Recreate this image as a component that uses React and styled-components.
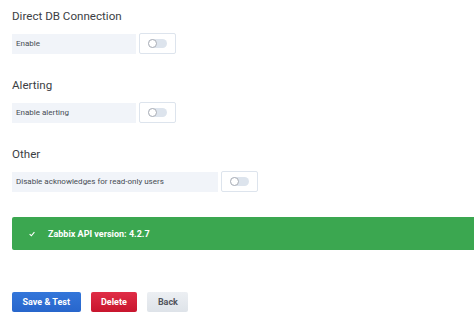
import React from "react";
import styled, { createGlobalStyle } from "styled-components";

const GlobalStyle = createGlobalStyle`
  body {
    margin: 0;
    background: #fff;
    font-family: Roboto, "Liberation Sans", sans-serif;
    color: #52545c;
  }
`;

const Page = styled.div`
  padding: 8px 0 0 12px;
  display: flex;
  flex-direction: column;
`;

const Section = styled.section`
  margin-bottom: 23px;
`;

const Title = styled.h3`
  margin: 0 0 9px;
  font-size: 11.6px;
  font-weight: 400;
  color: #3b3e44;
  line-height: 16px;
`;

const Row = styled.div`
  display: flex;
  gap: 3px;
  align-items: center;
`;

const Label = styled.div`
  width: ${(p) => p.width}px;
  height: 20px;
  box-sizing: border-box;
  padding: 0 4px;
  display: flex;
  align-items: center;
  background: #f1f4f9;
  font-size: 8px;
  color: #464c54;
`;

const ToggleBox = styled.div`
  width: 37px;
  height: 21px;
  box-sizing: border-box;
  border: 1px solid #dde4ed;
  border-radius: 2px;
  display: flex;
  align-items: center;
  justify-content: center;
`;

const Track = styled.div`
  position: relative;
  width: 19px;
  height: 9px;
  border-radius: 5px;
  background: #dde4ed;
`;

const Knob = styled.div`
  position: absolute;
  left: 0;
  top: 0;
  width: 9px;
  height: 9px;
  box-sizing: border-box;
  border-radius: 50%;
  background: #fff;
  border: 1px solid #a9adb5;
`;

const Alert = styled.div`
  margin-top: 2px;
  height: 33px;
  display: flex;
  align-items: center;
  background: #3ba750;
  border-radius: 2px 0 0 2px;
  color: #fff;
  padding-left: 16px;
`;

const AlertText = styled.span`
  margin-left: 12px;
  font-size: 9px;
  font-weight: 700;
`;

const Buttons = styled.div`
  margin-top: 42px;
  display: flex;
  gap: 10px;
`;

const Button = styled.button`
  height: 20px;
  padding: 0 10.5px;
  border: none;
  border-radius: 2px;
  font-family: Roboto, "Liberation Sans", sans-serif;
  font-size: 9px;
  font-weight: 700;
  color: ${(p) => (p.variant === "back" ? "#52545c" : "#fff")};
  background: ${(p) =>
    p.variant === "primary"
      ? "linear-gradient(to bottom, #3376da, #2866cc)"
      : p.variant === "danger"
      ? "linear-gradient(to bottom, #e02d46, #c8152e)"
      : "linear-gradient(to bottom, #eceff3, #dee3e9)"};
`;

const Toggle = () => (
  <ToggleBox>
    <Track>
      <Knob />
    </Track>
  </ToggleBox>
);

const Check = () => (
  <svg width="8" height="8" viewBox="0 0 10 10">
    <path d="M2 5.2 L4.2 7.2 L8 2.8" fill="none" stroke="#fff" strokeWidth="1.4" />
  </svg>
);

const App = () => (
  <Page>
    <GlobalStyle />
    <Section>
      <Title>Direct DB Connection</Title>
      <Row>
        <Label width={124}>Enable</Label>
        <Toggle />
      </Row>
    </Section>
    <Section>
      <Title>Alerting</Title>
      <Row>
        <Label width={124}>Enable alerting</Label>
        <Toggle />
      </Row>
    </Section>
    <Section>
      <Title>Other</Title>
      <Row>
        <Label width={206}>Disable acknowledges for read-only users</Label>
        <Toggle />
      </Row>
    </Section>
    <Alert>
      <Check />
      <AlertText>Zabbix API version: 4.2.7</AlertText>
    </Alert>
    <Buttons>
      <Button variant="primary">Save &amp; Test</Button>
      <Button variant="danger">Delete</Button>
      <Button variant="back">Back</Button>
    </Buttons>
  </Page>
);

export default App;
